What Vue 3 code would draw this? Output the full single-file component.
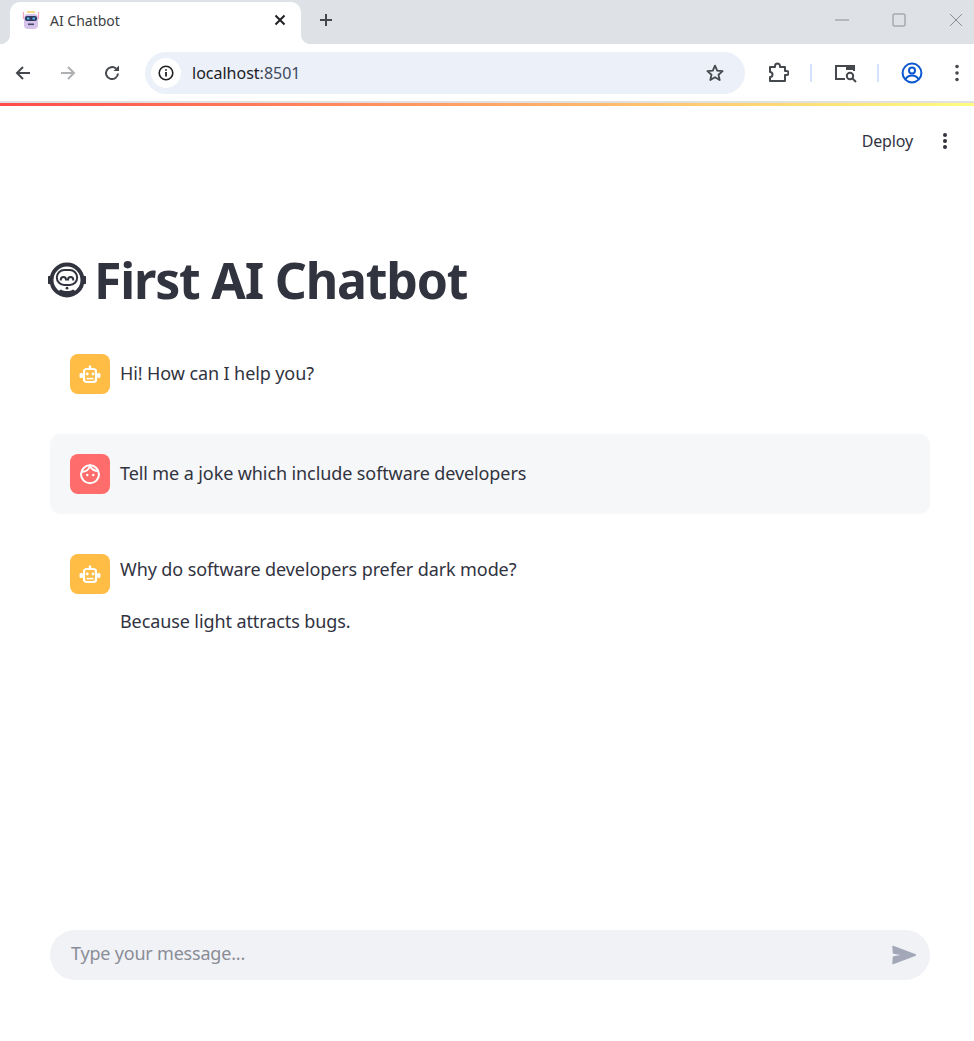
<template>
  <div class="window">
    <div class="tabstrip">
      <div class="tab">
        <svg class="favicon" width="18" height="18" viewBox="0 0 18 18">
          <path d="M1.500 1v7M16.500 1v7" stroke="#f4a6c0" stroke-width="1.2"/>
          <rect x="5" y="0" width="8" height="2" fill="#f6d98a"/>
          <rect x="2" y="3" width="14" height="15" rx="4" fill="#d6c3ec"/>
          <rect x="3" y="5" width="12" height="5" rx="2" fill="#2e3a5c"/>
          <rect x="5" y="6.500" width="2.500" height="2" fill="#55b6f0"/>
          <rect x="10.500" y="6.500" width="2.500" height="2" fill="#55b6f0"/>
          <rect x="6" y="12.500" width="6" height="1.600" fill="#4a4a6a"/>
        </svg>
        <span class="tab-title">AI Chatbot</span>
        <svg class="tab-close" width="12" height="12" viewBox="0 0 12 12">
          <path d="M1.500 1.500l9 9M10.500 1.500l-9 9" stroke="#202124" stroke-width="2"/>
        </svg>
      </div>
      <svg class="new-tab" width="14" height="14" viewBox="0 0 14 14">
        <path d="M7 1v12M1 7h12" stroke="#45484d" stroke-width="2"/>
      </svg>
      <div class="window-btns">
        <svg width="14" height="14" viewBox="0 0 14 14"><path d="M0 7h14" stroke="#8a8d91" stroke-width="1"/></svg>
        <svg width="14" height="14" viewBox="0 0 14 14"><rect x="1" y="1" width="12" height="12" rx="1" fill="none" stroke="#8a8d91"/></svg>
        <svg width="14" height="14" viewBox="0 0 14 14"><path d="M1 1l12 12M13 1L1 13" stroke="#8a8d91"/></svg>
      </div>
    </div>

    <div class="toolbar">
      <svg class="nav" width="18" height="18" viewBox="0 0 18 18">
        <path d="M16 9H3M9 3L3 9l6 6" fill="none" stroke="#45484d" stroke-width="2"/>
      </svg>
      <svg class="nav" width="18" height="18" viewBox="0 0 18 18">
        <path d="M2 9h13M9 3l6 6-6 6" fill="none" stroke="#aeb0b3" stroke-width="2"/>
      </svg>
      <svg class="nav" width="18" height="18" viewBox="0 0 18 18">
        <path d="M15 9.500A6 6 0 1 1 13 4.600" fill="none" stroke="#45484d" stroke-width="2"/>
        <path d="M10.500 7h5.500V1.500z" fill="#45484d"/>
      </svg>
      <div class="omnibox">
        <span class="site-info">
          <svg width="16" height="16" viewBox="0 0 16 16">
            <circle cx="8" cy="8" r="6.800" fill="none" stroke="#202124" stroke-width="1.600"/>
            <path d="M8 7v4.500M8 4.200v1.600" stroke="#202124" stroke-width="1.800"/>
          </svg>
        </span>
        <span class="url">localhost<span class="port">:8501</span></span>
        <svg class="star" width="20" height="20" viewBox="0 0 20 20">
          <path d="M10 2.600l2.200 5 5.400.5-4.100 3.600 1.200 5.300L10 14.200 5.300 17l1.200-5.300-4.100-3.600 5.400-.5z" fill="none" stroke="#45484d" stroke-width="1.800" stroke-linejoin="round"/>
        </svg>
      </div>
      <svg class="ext" width="22" height="22" viewBox="0 0 22 22">
        <path d="M3 5h5V4a2 2 0 0 1 5 0v1h5v4h1.500a2 2 0 0 1 0 4H18v6H3v-4a2.500 2.500 0 0 0 0-5z" fill="none" stroke="#45484d" stroke-width="2" stroke-linejoin="round"/>
      </svg>
      <span class="sep"></span>
      <svg class="cast" width="24" height="20" viewBox="0 0 24 20">
        <path d="M11 16H2V3h18v5" fill="none" stroke="#45484d" stroke-width="2"/>
        <rect x="12" y="2" width="9" height="5" fill="#45484d"/>
        <circle cx="16" cy="13" r="3.200" fill="none" stroke="#45484d" stroke-width="2"/>
        <path d="M18.500 15.500l3.500 3.500" stroke="#45484d" stroke-width="2"/>
      </svg>
      <span class="sep"></span>
      <svg class="profile" width="22" height="22" viewBox="0 0 22 22">
        <circle cx="11" cy="11" r="9.400" fill="none" stroke="#0b57d0" stroke-width="2"/>
        <circle cx="11" cy="8.600" r="3" fill="none" stroke="#0b57d0" stroke-width="2"/>
        <path d="M4.600 17c1.600-2.600 3.800-3.400 6.400-3.400s4.800.8 6.400 3.400" fill="none" stroke="#0b57d0" stroke-width="2"/>
      </svg>
      <svg class="kebab" width="4" height="18" viewBox="0 0 4 18">
        <circle cx="2" cy="2.500" r="1.800" fill="#45484d"/>
        <circle cx="2" cy="9" r="1.800" fill="#45484d"/>
        <circle cx="2" cy="15.500" r="1.800" fill="#45484d"/>
      </svg>
    </div>

    <div class="app">
      <div class="decoration"></div>
      <header class="app-header">
        <span class="deploy">Deploy</span>
        <svg width="4" height="16" viewBox="0 0 4 16">
          <circle cx="2" cy="2" r="2" fill="#31333f"/>
          <circle cx="2" cy="8" r="2" fill="#31333f"/>
          <circle cx="2" cy="14" r="2" fill="#31333f"/>
        </svg>
      </header>

      <main class="main">
        <h1 class="title">
          <svg class="title-icon" width="38" height="38" viewBox="0 0 38 38">
            <path d="M2 15.500a3.500 3.500 0 0 0 0 7M36 15.500a3.500 3.500 0 0 1 0 7" fill="#31333f" stroke="#31333f" stroke-width="1.500"/>
            <circle cx="19" cy="19" r="15.500" fill="#fff" stroke="#31333f" stroke-width="4"/>
            <path d="M9 31c2.500 2 6 3 10 3s7.500-1 10-3l-4-2.500c-1.500 1-3.500 1.500-6 1.500s-4.500-.5-6-1.500z" fill="#31333f"/>
            <rect x="8.800" y="9" width="20.400" height="15" rx="7.500" fill="#fff" stroke="#31333f" stroke-width="2"/>
            <path d="M12.800 19.500v-1a2.600 2.600 0 0 1 5.200 0v1M20 19.500v-1a2.600 2.600 0 0 1 5.200 0v1" fill="none" stroke="#31333f" stroke-width="2"/>
            <circle cx="19" cy="27.200" r="1.400" fill="#31333f"/>
          </svg>
          <span>First AI Chatbot</span>
        </h1>

        <div class="messages">
          <div v-for="(m, i) in messages" :key="i" class="message" :class="{ 'from-user': m.role === 'user' }">
            <div class="avatar">
              <svg v-if="m.role === 'assistant'" width="24" height="24" viewBox="0 0 24 24">
                <rect x="10.800" y="3.500" width="2.400" height="3" fill="#fff"/>
                <rect x="6" y="7" width="12" height="13" rx="2.500" fill="none" stroke="#fff" stroke-width="2.200"/>
                <rect x="1.500" y="11" width="3.500" height="5" rx="1.500" fill="#fff"/>
                <rect x="19" y="11" width="3.500" height="5" rx="1.500" fill="#fff"/>
                <circle cx="9.300" cy="12" r="1.400" fill="#fff"/>
                <circle cx="15" cy="12" r="1.400" fill="#fff"/>
                <rect x="8.700" y="15.800" width="6.800" height="1.600" fill="#fff"/>
              </svg>
              <svg v-else width="24" height="24" viewBox="0 0 24 24">
                <circle cx="12" cy="12.300" r="9" fill="none" stroke="#fff" stroke-width="2"/>
                <path d="M3.500 9.500c3 .5 6.500-.5 8.500-5.500 1.500 3 4.500 5 8.500 5" fill="none" stroke="#fff" stroke-width="2"/>
                <circle cx="9.300" cy="13" r="1.200" fill="#fff"/>
                <circle cx="15.300" cy="13" r="1.200" fill="#fff"/>
              </svg>
            </div>
            <div class="body" :class="{ single: m.lines.length === 1 }">
              <p v-for="(line, j) in m.lines" :key="j">{{ line }}</p>
            </div>
          </div>
        </div>
      </main>

      <div class="chat-input">
        <span class="placeholder">Type your message...</span>
        <svg class="send" width="24" height="20" viewBox="0 0 24 20">
          <path d="M1 1.500l22.500 8.500L1 18.500l.5-6.500 11-2-11-2z" fill="#a3a8b8" stroke="#a3a8b8" stroke-width="1.500" stroke-linejoin="round"/>
        </svg>
      </div>
    </div>
  </div>
</template>

<script setup>
const messages = [
  { role: 'assistant', lines: ['Hi! How can I help you?'] },
  { role: 'user', lines: ['Tell me a joke which include software developers'] },
  { role: 'assistant', lines: ['Why do software developers prefer dark mode?', 'Because light attracts bugs.'] },
]
</script>

<style>
html, body {
  margin: 0;
  background: #fff;
}
</style>

<style scoped>
.window {
  display: flex;
  flex-direction: column;
  height: 1041px;
  overflow: hidden;
  font-family: "Noto Sans", "Liberation Sans", sans-serif;
}

.tabstrip {
  display: flex;
  align-items: center;
  height: 44px;
  background: #dee1e6;
  flex: none;
}

.tab {
  position: relative;
  display: flex;
  align-items: center;
  width: 291px;
  height: 42px;
  margin: 2px 0 0 10px;
  padding: 0 15px 6px 12px;
  box-sizing: border-box;
  background: #fff;
  border-radius: 10px 10px 0 0;
}

/* concave corners where the tab meets the toolbar */
.tab::before,
.tab::after {
  content: "";
  position: absolute;
  bottom: 0;
  width: 10px;
  height: 10px;
}

.tab::before {
  left: -10px;
  background: radial-gradient(circle at 0 0, transparent 10px, #fff 10.5px);
}

.tab::after {
  right: -10px;
  background: radial-gradient(circle at 100% 0, transparent 10px, #fff 10.5px);
}

.favicon {
  flex: none;
}

.tab-title {
  margin-left: 10px;
  font-family: "Noto Sans", sans-serif;
  font-size: 14px;
  color: #3c4043;
}

.tab-close {
  margin-left: auto;
}

.new-tab {
  margin: 0 0 5px 18px;
}

.window-btns {
  display: flex;
  gap: 43px;
  margin: 0 11px 5px auto;
}

.toolbar {
  display: flex;
  align-items: center;
  height: 57px;
  flex: none;
  background: #fff;
  border-bottom: 2px solid #e0e0e0;
  box-sizing: content-box;
  padding-left: 14px;
}

.nav {
  margin-right: 27px;
}

.nav:nth-child(3) {
  margin-right: 0;
  margin-left: -1px;
}

.omnibox {
  display: flex;
  align-items: center;
  width: 600px;
  height: 42px;
  margin-left: 24px;
  background: #ebf0f9;
  border-radius: 21px;
  box-sizing: border-box;
  padding: 0 20px 0 6px;
}

.site-info {
  display: flex;
  align-items: center;
  justify-content: center;
  width: 30px;
  height: 30px;
  background: #fff;
  border-radius: 50%;
}

.url {
  margin-left: 11px;
  font-family: "Noto Sans", sans-serif;
  font-size: 16px;
  color: #202124;
}

.port {
  color: #3f4a5c;
}

.star {
  margin-left: auto;
}

.ext {
  margin-left: 22px;
}

.sep {
  width: 2px;
  height: 18px;
  margin: 0 21px;
  background: #d3e3fd;
}

.cast {
  margin: 0 -2px 0 1px;
}

.profile {
  margin-left: 1px;
}

.kebab {
  margin-left: 32px;
}

.app {
  flex: 1;
  display: flex;
  flex-direction: column;
  min-height: 0;
  color: #31333f;
}

.decoration {
  height: 3px;
  flex: none;
  background: linear-gradient(90deg, #ff4b4b, #fffd80);
}

.app-header {
  display: flex;
  align-items: center;
  justify-content: flex-end;
  gap: 30px;
  height: 70px;
  padding-right: 27px;
  flex: none;
}

.deploy {
  font-size: 16px;
  letter-spacing: -0.15px;
}

.main {
  flex: 1;
  padding: 0 44px 0 50px;
}

.title {
  display: flex;
  align-items: center;
  gap: 8px;
  margin: 74px 0 24px -2px;
  font-family: "Noto Sans", sans-serif;
  font-size: 50px;
  font-weight: 700;
  line-height: 60px;
  letter-spacing: -1.2px;
}

.messages {
  display: flex;
  flex-direction: column;
  gap: 20px;
}

.message {
  display: flex;
  gap: 10px;
  padding: 20px;
  border-radius: 10px;
}

.from-user {
  background: #f6f7f9;
}

.avatar {
  display: flex;
  align-items: center;
  justify-content: center;
  width: 40px;
  height: 40px;
  flex: none;
  border-radius: 8px;
  background: #ffbd45;
}

.from-user .avatar {
  background: #ff6c6c;
}

.body {
  font-size: 18px;
  line-height: 30px;
  letter-spacing: -0.1px;
}

.body.single {
  align-self: center;
  padding-bottom: 2px;
}

.body p {
  margin: 0 0 22px;
}

.body p:last-child {
  margin-bottom: 0;
}

.chat-input {
  display: flex;
  align-items: center;
  justify-content: space-between;
  height: 50px;
  margin: 0 44px 61px 50px;
  padding: 0 14px 0 21px;
  flex: none;
  background: #f0f2f6;
  border-radius: 25px;
}

.placeholder {
  padding-bottom: 5px;
  font-size: 18px;
  letter-spacing: -0.2px;
  color: #8a8d96;
}
</style>
